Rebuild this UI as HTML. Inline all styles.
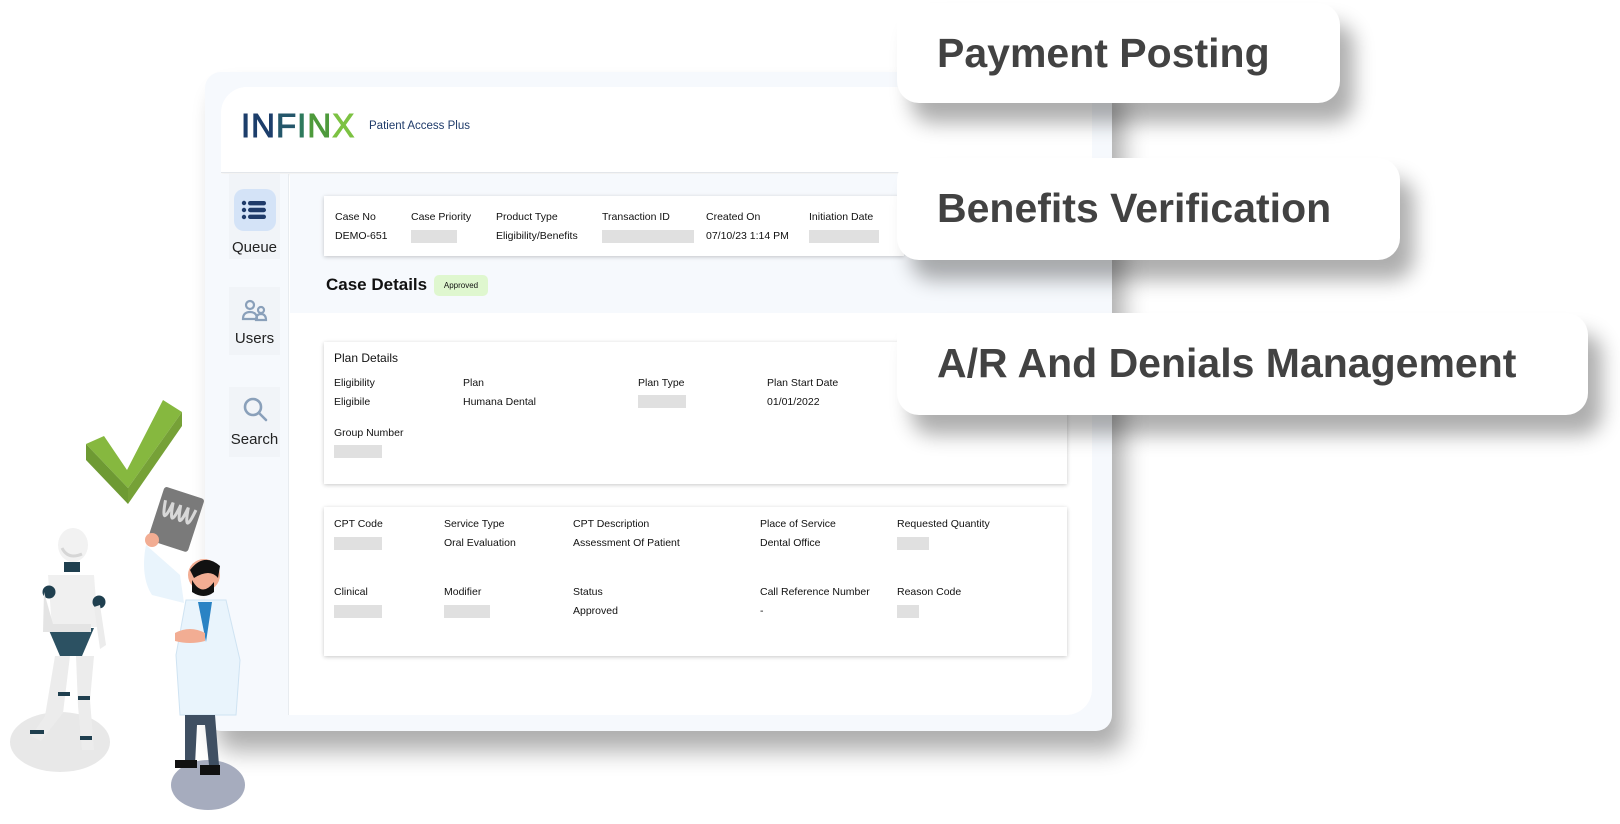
<!DOCTYPE html>
<html><head><meta charset="utf-8"><style>
*{margin:0;padding:0;box-sizing:border-box}
body{width:1620px;height:824px;background:#fff;position:relative;overflow:hidden;font-family:"Liberation Sans",Arial,sans-serif;color:#111}
.abs{position:absolute}
.outer{left:205px;top:72px;width:907px;height:659px;background:#f6f9fd;border-radius:16px;box-shadow:12px 20px 24px rgba(0,0,0,.32)}
.inner{left:221px;top:87px;width:871px;height:628px;background:#fff;border-radius:26px 0 26px 0;overflow:hidden}
.hdr{left:0;top:0;width:871px;height:86px;background:#fff;border-bottom:1px solid #e3e6ea;box-shadow:0 2px 3px rgba(0,0,0,.06)}
.side{left:0;top:87px;width:68px;height:541px;background:#f6f9fd;border-right:1px solid #e8ecf0}
.ctop{left:69px;top:87px;width:802px;height:139px;background:#f6f9fd}
.card{background:#fff;box-shadow:0 1px 4px rgba(0,0,0,.22)}
.t{position:absolute;font-size:10.5px;color:#111;white-space:nowrap}
.g{position:absolute;background:#e0e0e0;height:13px}
.pill{background:#fff;border-radius:22px;box-shadow:14px 20px 20px rgba(0,0,0,.32);font-weight:bold;font-size:41px;color:#424242;padding-left:40px;line-height:100px}
.nav{position:absolute;left:8px;width:51px;background:#f1f4f8;text-align:center;font-size:15px;color:#222}
</style></head><body>
<div class="abs outer"></div>
<div class="abs inner">
 <div class="abs hdr">
  <div class="abs" style="left:20px;top:20px;font-size:33px;letter-spacing:1px;-webkit-text-stroke:1px currentColor"><span style="color:#1d3e6b">IN</span><span style="color:#24566a">F</span><span style="color:#2e7a5c">I</span><span style="color:#4e9a3c">N</span><span style="color:#7cc242">X</span></div>
  <div class="abs" style="left:148px;top:33px;font-size:11.5px;color:#1f3b6a">Patient Access Plus</div>
 </div>
 <div class="abs side">
  <div class="nav" style="top:0;height:85px">
   <div style="margin:15px auto 0;width:42px;height:42px;background:#d4e3f7;border-radius:10px;position:relative">
    <svg width="42" height="42" viewBox="0 0 42 42"><g fill="#1f3b6a"><circle cx="10" cy="14" r="2.2"/><circle cx="10" cy="21" r="2.2"/><circle cx="10" cy="28" r="2.2"/><rect x="14" y="12" width="18" height="4.4" rx="2.2"/><rect x="14" y="18.8" width="18" height="4.4" rx="2.2"/><rect x="14" y="25.6" width="18" height="4.4" rx="2.2"/></g></svg>
   </div>
   <div style="margin-top:8px">Queue</div>
  </div>
  <div class="nav" style="top:113px;height:68px">
   <svg width="30" height="26" viewBox="0 0 30 26" style="margin-top:11px"><g fill="none" stroke="#8aa0ba" stroke-width="2.2"><circle cx="10" cy="7" r="4"/><path d="M3 21c0-5 3-7 7-7s7 2 7 7z"/><circle cx="21" cy="12" r="3"/><path d="M16 22c0-4 2-6 5-6s5 2 5 6z"/></g></svg>
   <div style="margin-top:2px">Users</div>
  </div>
  <div class="nav" style="top:213px;height:70px">
   <svg width="28" height="28" viewBox="0 0 28 28" style="margin-top:8px"><g fill="none" stroke="#8aa0ba" stroke-width="2.6"><circle cx="12" cy="12" r="8"/><path d="M18 18l7 7" stroke-linecap="round"/></g></svg>
   <div style="margin-top:4px">Search</div>
  </div>
 </div>
 <div class="abs ctop"></div>
</div>
<!-- top case card -->
<div class="abs card" style="left:324px;top:196px;width:580px;height:60px">
 <div class="t" style="left:11px;top:15px">Case No</div><div class="t" style="left:11px;top:34px">DEMO-651</div>
 <div class="t" style="left:87px;top:15px">Case Priority</div><div class="g" style="left:87px;top:34px;width:46px"></div>
 <div class="t" style="left:172px;top:15px">Product Type</div><div class="t" style="left:172px;top:34px">Eligibility/Benefits</div>
 <div class="t" style="left:278px;top:15px">Transaction ID</div><div class="g" style="left:278px;top:34px;width:92px"></div>
 <div class="t" style="left:382px;top:15px">Created On</div><div class="t" style="left:382px;top:34px">07/10/23 1:14 PM</div>
 <div class="t" style="left:485px;top:15px">Initiation Date</div><div class="g" style="left:485px;top:34px;width:70px"></div>
</div>
<div class="abs" style="left:326px;top:275px;font-size:17px;font-weight:bold">Case Details</div>
<div class="abs" style="left:434px;top:275px;width:54px;height:21px;background:#dff7cf;border-radius:5px;font-size:8px;text-align:center;line-height:21px">Approved</div>
<!-- plan card -->
<div class="abs card" style="left:324px;top:342px;width:743px;height:142px">
 <div class="t" style="left:10px;top:9px;font-size:12px">Plan Details</div>
 <div class="t" style="left:10px;top:35px">Eligibility</div><div class="t" style="left:10px;top:54px">Eligibile</div>
 <div class="t" style="left:139px;top:35px">Plan</div><div class="t" style="left:139px;top:54px">Humana Dental</div>
 <div class="t" style="left:314px;top:35px">Plan Type</div><div class="g" style="left:314px;top:53px;width:48px"></div>
 <div class="t" style="left:443px;top:35px">Plan Start Date</div><div class="t" style="left:443px;top:54px">01/01/2022</div>
 <div class="t" style="left:10px;top:85px">Group Number</div><div class="g" style="left:10px;top:103px;width:48px"></div>
</div>
<!-- cpt card -->
<div class="abs card" style="left:324px;top:507px;width:743px;height:149px">
 <div class="t" style="left:10px;top:11px">CPT Code</div><div class="g" style="left:10px;top:30px;width:48px"></div>
 <div class="t" style="left:120px;top:11px">Service Type</div><div class="t" style="left:120px;top:30px">Oral Evaluation</div>
 <div class="t" style="left:249px;top:11px">CPT Description</div><div class="t" style="left:249px;top:30px">Assessment Of Patient</div>
 <div class="t" style="left:436px;top:11px">Place of Service</div><div class="t" style="left:436px;top:30px">Dental Office</div>
 <div class="t" style="left:573px;top:11px">Requested Quantity</div><div class="g" style="left:573px;top:30px;width:32px"></div>
 <div class="t" style="left:10px;top:79px">Clinical</div><div class="g" style="left:10px;top:98px;width:48px"></div>
 <div class="t" style="left:120px;top:79px">Modifier</div><div class="g" style="left:120px;top:98px;width:46px"></div>
 <div class="t" style="left:249px;top:79px">Status</div><div class="t" style="left:249px;top:98px">Approved</div>
 <div class="t" style="left:436px;top:79px">Call Reference Number</div><div class="t" style="left:436px;top:98px">-</div>
 <div class="t" style="left:573px;top:79px">Reason Code</div><div class="g" style="left:573px;top:98px;width:22px"></div>
</div>
<!-- pills -->
<div class="abs pill" style="left:897px;top:3px;width:443px;height:100px">Payment Posting</div>
<div class="abs pill" style="left:897px;top:158px;width:503px;height:102px">Benefits Verification</div>
<div class="abs pill" style="left:897px;top:313px;width:691px;height:102px">A/R And Denials Management</div>
<!-- illustrations -->
<svg class="abs" style="left:0;top:380px" width="320" height="444" viewBox="0 0 320 444">
 <ellipse cx="60" cy="362" rx="50" ry="30" fill="#e8e8e8"/>
 <ellipse cx="208" cy="405" rx="37" ry="25" fill="#a6acbe"/>
 <!-- check -->
 <polygon points="86,64 104,56 127,90 163,20 182,32 128,108" fill="#86b83f"/>
 <polygon points="86,64 86,80 128,124 128,108" fill="#6e9a33"/>
 <polygon points="182,32 182,46 128,124 128,108" fill="#76a137"/>
 <!-- robot -->
 <ellipse cx="73" cy="165" rx="15" ry="17" fill="#f2f2f2"/>
 <path d="M62 168q6 12 20 6" fill="none" stroke="#d6d6d6" stroke-width="3"/>
 <rect x="64" y="182" width="16" height="10" fill="#1f3f4f"/>
 <path d="M48 195h46l4 52H52z" fill="#f0f0f0"/>
 <circle cx="49" cy="212" r="6.5" fill="#1f3f4f"/><circle cx="99" cy="222" r="6.5" fill="#1f3f4f"/>
 <path d="M48 248h46l-12 28H60z" fill="#2c5162"/>
 <path d="M44 212l-1 40 48 0 0-8-38 0z" fill="#e4e4e4"/>
 <path d="M100 225l6 40-6 4-6-42z" fill="#ececec"/>
 <path d="M55 276l-10 60-14 20 10 5 22-28 7-57zM76 276l2 50 4 44 12 0-4-50 4-44z" fill="#ececec"/>
 <rect x="30" y="350" width="14" height="4" fill="#1f3f4f"/><rect x="80" y="356" width="12" height="4" fill="#1f3f4f"/>
 <rect x="58" y="312" width="12" height="4" fill="#1f3f4f"/><rect x="78" y="316" width="12" height="4" fill="#1f3f4f"/>
 <!-- xray -->
 <g transform="rotate(18 178 140)"><rect x="155" y="112" width="42" height="56" rx="3" fill="#7a7a7a"/><path d="M160 125q4 30 8 0q4 30 8 0q4 30 8 0q4 30 8 0" fill="none" stroke="#d8d8d8" stroke-width="3"/></g>
 <!-- doctor -->
 <path d="M146 165c-4 20-2 38 6 50l32 8-4-28z" fill="#e9f4fc"/>
 <circle cx="152" cy="160" r="7" fill="#f2ad93"/>
 <path d="M186 220h40l14 60-4 55h-56l-4-60z" fill="#e9f4fc" stroke="#cfe3f2"/>
 <path d="M198 222l14 0-6 40z" fill="#2a83c4"/>
 <circle cx="204" cy="195" r="16" fill="#f2ad93"/>
 <path d="M190 190q14-18 30-4l-2 12q-8-10-24 0z" fill="#111"/>
 <path d="M192 200q10 18 22 2l0 10q-10 8-22 0z" fill="#111"/>
 <path d="M185 335h30l4 50-10 0-4-40-8 0-2 40-10 0z" fill="#3f4f62"/>
 <path d="M175 380h22v8h-22zM200 385h20v10h-20z" fill="#111"/>
 <path d="M175 253q15-8 30 0l0 8q-15 4-30 0z" fill="#f2ad93"/>
</svg>
</body></html>
